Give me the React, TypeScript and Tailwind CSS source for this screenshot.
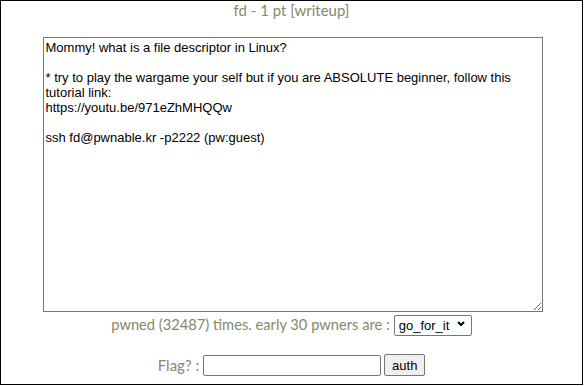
import { useState } from "react";

const DESC = `Mommy! what is a file descriptor in Linux?

* try to play the wargame your self but if you are ABSOLUTE beginner, follow this tutorial link:
https://youtu.be/971eZhMHQQw

ssh fd@pwnable.kr -p2222 (pw:guest)`;

export default function App() {
  const [flag, setFlag] = useState("");

  return (
    <div className="w-[583px] h-[385px] border border-black bg-white flex flex-col items-center font-['Lato',sans-serif] text-[#87876b]">
      {/* Title */}
      <div className="h-[20px] mt-[-1px] text-[15px] leading-[20px]">
        fd - 1 pt [writeup]
      </div>

      {/* Description */}
      <textarea
        readOnly
        defaultValue={DESC}
        className="mt-[17px] ml-[2px] w-[500px] h-[275px] border border-[#767676] px-[2px] pt-[2px] pb-[1px] text-[13px] leading-[15px] text-black font-['Liberation_Sans',Arial,sans-serif] outline-none"
      />

      {/* Pwners */}
      <div className="mt-[2px] flex items-center text-[14.7px] h-[21px]">
        <span>pwned (32487) times. early 30 pwners are :</span>
        <div className="relative ml-[4px]">
          <select className="appearance-none w-[78px] h-[21px] border border-[#767676] rounded-[2px] bg-white pl-[4px] text-[13px] text-black font-['Liberation_Sans',Arial,sans-serif] outline-none">
            <option>go_for_it</option>
          </select>
          <svg
            className="absolute right-[7px] top-[8px] pointer-events-none"
            width="8"
            height="5"
            viewBox="0 0 8 5"
          >
            <path d="M1 1l3 3 3-3" fill="none" stroke="#000" strokeWidth="2" />
          </svg>
        </div>
      </div>

      {/* Flag */}
      <div className="mt-[19px] flex items-center text-[15px]">
        <span>Flag? :</span>
        <input
          value={flag}
          onChange={(e) => setFlag(e.target.value)}
          className="ml-[4px] w-[178px] h-[21px] border border-[#767676] rounded-[2px] px-[2px] text-[13px] text-black font-['Liberation_Sans',Arial,sans-serif] outline-none"
        />
        <button className="ml-[3px] w-[41px] h-[22px] border border-[#767676] rounded-[2px] bg-[#efefef] text-[13px] text-black font-['Liberation_Sans',Arial,sans-serif]">
          auth
        </button>
      </div>
    </div>
  );
}
